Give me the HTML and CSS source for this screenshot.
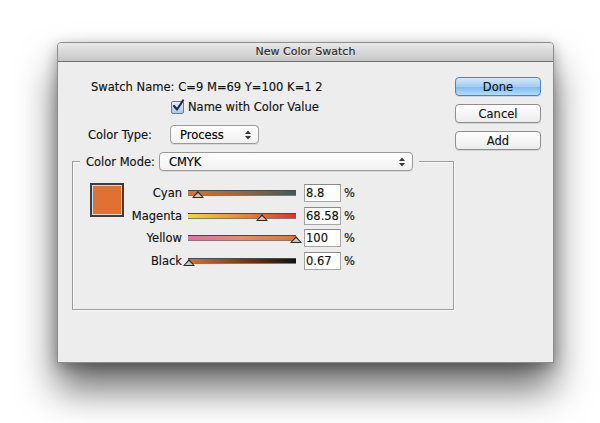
FILE: index.html
```html
<!DOCTYPE html>
<html lang="en">
<head>
    <meta charset="UTF-8">
    <meta name="viewport" content="width=device-width, initial-scale=1.0">
    <title>New Color Swatch</title>
    <link rel="stylesheet" href="styles.css">
</head>
<body>
    <div class="window">
        <div class="titlebar">New Color Swatch</div>
        <div class="content">
            <div class="form">
                <div class="row name-row">
                    <span class="label">Swatch Name:</span>
                    <span class="value">C=9 M=69 Y=100 K=1 2</span>
                </div>
                <div class="row check-row">
                    <span class="checkbox">
                        <svg width="14" height="14" viewBox="0 0 14 14">
                            <path d="M3 7 L6 10.5 L12 1.5" fill="none" stroke="#1d2d4a" stroke-width="2.2" stroke-linecap="round" stroke-linejoin="round"/>
                        </svg>
                    </span>
                    <span>Name with Color Value</span>
                </div>
                <div class="row type-row">
                    <span class="label">Color Type:</span>
                    <div class="popup popup-type">
                        <span>Process</span>
                        <svg class="arrows" width="6" height="10" viewBox="0 0 6 10">
                            <path d="M0 4 L3 0.5 L6 4 Z M0 6 L3 9.5 L6 6 Z" fill="#3a3a3a"/>
                        </svg>
                    </div>
                </div>
                <div class="group">
                    <div class="legend">
                        <span>Color Mode:</span>
                        <div class="popup popup-mode">
                            <span>CMYK</span>
                            <svg class="arrows" width="6" height="10" viewBox="0 0 6 10">
                                <path d="M0 4 L3 0.5 L6 4 Z M0 6 L3 9.5 L6 6 Z" fill="#3a3a3a"/>
                            </svg>
                        </div>
                    </div>
                    <div class="group-body">
                        <div class="swatch"></div>
                        <div class="channels">
                            <div class="channel">
                                <span class="channel-name">Cyan</span>
                                <div class="slider cyan"><span class="thumb" style="left: 8.8%"></span></div>
                                <input type="text" value="8.8">
                                <span class="pct">%</span>
                            </div>
                            <div class="channel">
                                <span class="channel-name">Magenta</span>
                                <div class="slider magenta"><span class="thumb" style="left: 68.58%"></span></div>
                                <input type="text" value="68.58">
                                <span class="pct">%</span>
                            </div>
                            <div class="channel">
                                <span class="channel-name">Yellow</span>
                                <div class="slider yellow"><span class="thumb" style="left: 100%"></span></div>
                                <input type="text" value="100">
                                <span class="pct">%</span>
                            </div>
                            <div class="channel">
                                <span class="channel-name">Black</span>
                                <div class="slider black"><span class="thumb" style="left: 0.67%"></span></div>
                                <input type="text" value="0.67">
                                <span class="pct">%</span>
                            </div>
                        </div>
                    </div>
                </div>
            </div>
            <div class="buttons">
                <button class="default">Done</button>
                <button>Cancel</button>
                <button>Add</button>
            </div>
        </div>
    </div>
</body>
</html>
```

FILE: styles.css
```css
html, body {
    height: 423px;
}
body {
    margin: 0;
    padding-top: 42px;
    box-sizing: border-box;
    background: #fff;
    font-family: "DejaVu Sans", sans-serif;
    font-size: 11.5px;
    color: #111;
    -webkit-text-stroke: 0.15px;
}
.window {
    box-sizing: border-box;
    width: 497px;
    height: 321px;
    margin-left: 57px;
    background: #ededed;
    border: 1px solid #8c8c8c;
    border-radius: 4px 4px 0 0;
    box-shadow: 0 26px 38px rgba(0, 0, 0, 0.58), 0 4px 14px rgba(0, 0, 0, 0.3);
}
.titlebar {
    height: 18px;
    line-height: 18px;
    text-align: center;
    font-size: 11px;
    color: #2a2a2a;
    text-shadow: 0 1px 0 rgba(255, 255, 255, 0.6);
    background: linear-gradient(#e9e9e9, #c6c6c6);
    border-bottom: 1px solid #6e6e6e;
    border-radius: 3px 3px 0 0;
}
.content {
    display: flex;
}
.form {
    width: 397px;
    padding-top: 15px;
}
.row {
    display: flex;
    align-items: center;
}
.name-row {
    height: 20px;
    padding-left: 33px;
}
.name-row .value {
    margin-left: 4px;
}
.check-row {
    height: 20px;
    padding-left: 113px;
}
.checkbox {
    box-sizing: border-box;
    width: 13px;
    height: 13px;
    margin-right: 4px;
    border: 1px solid #6d7a8c;
    border-radius: 2px;
    background: linear-gradient(#e4eefa, #a9c9ec);
    position: relative;
}
.checkbox svg {
    position: absolute;
    left: -1px;
    top: -3px;
}
.type-row {
    height: 19px;
    margin-top: 8px;
    padding-left: 30px;
}
.type-row .label {
    width: 82px;
}
.popup {
    box-sizing: border-box;
    height: 19px;
    display: flex;
    align-items: center;
    justify-content: space-between;
    padding: 0 7px 0 9px;
    border: 1px solid #9a9a9a;
    border-radius: 4px;
    background: linear-gradient(#ffffff, #f1f1f1);
    box-shadow: 0 1px 0 rgba(0, 0, 0, 0.08);
    color: #000;
}
.popup-type {
    width: 89px;
}
.popup-mode {
    width: 254px;
    margin-left: 4px;
}
.group {
    box-sizing: border-box;
    width: 382px;
    height: 149px;
    margin: 17px 0 0 14px;
    border: 1px solid #9c9c9c;
    box-shadow: inset 1px 1px 0 #fbfbfb, 1px 1px 0 #fbfbfb;
}
.legend {
    display: flex;
    align-items: center;
    width: fit-content;
    height: 19px;
    margin: -10px 0 0 7px;
    padding: 0 6px;
    background: #ededed;
}
.group-body {
    display: flex;
    margin-top: 11px;
}
.swatch {
    box-sizing: border-box;
    width: 34px;
    height: 34px;
    margin: 1px 0 0 17px;
    background: #e07133;
    border: 2px solid #3e3e3e;
    box-shadow: inset 0 0 0 1px #d8d8d8;
}
.channels {
    margin-left: 4px;
}
.channel {
    display: flex;
    align-items: center;
    height: 22.5px;
}
.channel-name {
    width: 54px;
    text-align: right;
    margin-right: 6px;
}
.slider {
    position: relative;
    box-sizing: border-box;
    width: 108px;
    height: 6px;
    border-top: 1px solid #4a4a4a;
    border-bottom: 1px solid #7a7a7a;
}
.cyan {
    background: linear-gradient(to right, #e06f30, #a06640 45%, #3d5b5a);
}
.magenta {
    background: linear-gradient(to right, #f2d636, #eb8a2e 50%, #e2302f);
}
.yellow {
    background: linear-gradient(to right, #e46ea6, #e48a70 50%, #e2752f);
}
.black {
    background: linear-gradient(to right, #e07030, #7a3a1a 50%, #111);
}
.thumb {
    position: absolute;
    bottom: -3px;
    width: 0;
    height: 0;
    margin-left: -6px;
    border-left: 6px solid transparent;
    border-right: 6px solid transparent;
    border-bottom: 7px solid #2a2a2a;
}
.thumb::after {
    content: "";
    position: absolute;
    left: -4px;
    top: 2px;
    border-left: 4px solid transparent;
    border-right: 4px solid transparent;
    border-bottom: 4px solid #c8c8c8;
}
.channel input {
    box-sizing: border-box;
    width: 37px;
    height: 18px;
    margin-left: 8px;
    padding: 0 1px;
    border: 1px solid #a6a6a6;
    border-top-color: #8a8a8a;
    background: #fff;
    font-family: "DejaVu Sans", sans-serif;
    font-size: 11.5px;
    color: #111;
    -webkit-text-stroke: 0.15px;
}
.pct {
    margin-left: 3px;
}
.buttons {
    display: flex;
    flex-direction: column;
    gap: 8px;
    padding-top: 15px;
}
.buttons button {
    box-sizing: border-box;
    width: 86px;
    height: 19px;
    padding: 0;
    border: 1px solid #8e8e8e;
    border-radius: 4px;
    background: linear-gradient(#ffffff, #ececec);
    box-shadow: 0 1px 0 rgba(0, 0, 0, 0.1);
    font-family: "DejaVu Sans", sans-serif;
    font-size: 11.5px;
    color: #111;
    -webkit-text-stroke: 0.15px;
}
.buttons button.default {
    border-color: #5a7fb0;
    background: linear-gradient(#d4e8fb, #a2cdf5 50%, #7cbaf2 51%, #b4dcfb);
}
```
